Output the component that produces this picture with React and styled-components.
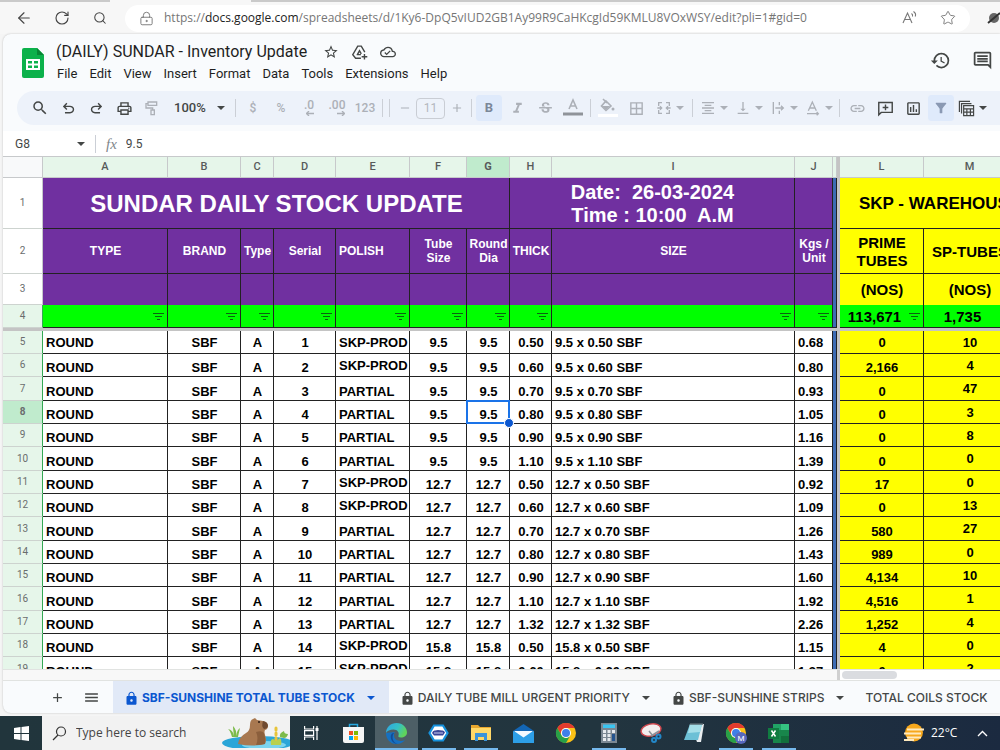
import React from 'react';
import styled, { createGlobalStyle, css } from 'styled-components';
import { ArrowLeft, RotateCw, Search, LockKeyhole, Star } from 'lucide-react';
import {
  MdSearch, MdOutlineLocalPrintshop, MdFormatItalic, MdStrikethroughS, MdBorderAll,
  MdFormatAlignCenter, MdVerticalAlignBottom, MdLink, MdFilterAlt, MdHistory, MdStarBorder,
  MdOutlineCloudDone, MdLock, MdMenu, MdAdd, MdRemove, MdOutlineInsertChart,
  MdOutlineComment,
} from 'react-icons/md';

const ui = 'Roboto, "Liberation Sans", sans-serif';
const segoe = '"Open Sans", "Noto Sans", sans-serif';

const Global = createGlobalStyle`
  * { box-sizing: border-box; }
  body { margin: 0; overflow: hidden; background: #f5f5f5; font-family: ${ui}; }
  button, input, select { font: inherit; color: inherit; border: 0; background: none; padding: 0; margin: 0; outline: none; }
  svg { display: block; flex: none; }
`;

const Screen = styled.div`
  display: flex;
  flex-direction: column;
  height: 100vh;
  overflow: hidden;
`;

/* ---------- browser ---------- */
const TabStrip = styled.div`
  display: flex;
  height: 2px;
  flex: none;
`;
const StripPart = styled.div`
  width: ${(p) => p.$w || 'auto'};
  flex: ${(p) => (p.$w ? 'none' : 1)};
  background: ${(p) => (p.$active ? '#f7f7f7' : '#cacaca')};
`;
const AddressRow = styled.div`
  display: flex;
  align-items: center;
  flex: none;
  height: 32px;
  padding-left: 5px;
  background: #f7f7f7;
  color: #444;
`;
const BrowserButton = styled.button`
  display: flex;
  align-items: center;
  justify-content: center;
  width: 38px;
  height: 26px;
`;
const Omnibox = styled.div`
  display: flex;
  align-items: center;
  flex: 1;
  height: 27px;
  margin-left: 6px;
  padding: 0 3px 0 14px;
  border-radius: 14px;
  background: #fff;
  color: #777;
`;
const Url = styled.div`
  flex: 1;
  margin-left: 10px;
  font: 12px/18px ${segoe};
  white-space: nowrap;
  color: #767676;
  b { font-weight: 400; color: #222; }
`;
const Extension = styled.div`
  width: 30px;
  padding-left: 17px;
  overflow: hidden;
`;

/* ---------- document shell ---------- */
const Doc = styled.main`
  display: flex;
  flex-direction: column;
  flex: 1;
  min-height: 0;
  margin: 0 0 3px 3px;
  border-radius: 8px 0 0 8px;
  overflow: hidden;
  background: #f9fbfd;
  box-shadow: 0 0 2px #bbb;
`;
const Header = styled.header`
  display: flex;
  align-items: center;
  flex: none;
  height: 57px;
  padding: 0 7px 0 19px;
  color: #444746;
`;
const TitleBlock = styled.div`
  flex: 1;
  margin-left: 8px;
`;
const TitleRow = styled.div`
  display: flex;
  align-items: center;
  gap: 12px;
  height: 22px;
  padding-left: 4px;
`;
const Title = styled.h1`
  margin: 0 4px 0 0;
  font: 400 16px/22px ${ui};
  color: #1f1f1f;
  white-space: nowrap;
`;
const Menu = styled.nav`
  display: flex;
  height: 20px;
  margin-top: 1px;
`;
const MenuItem = styled.button`
  padding: 0 7px 0 5px;
  font: 13px/20px ${ui};
  color: #1f1f1f;
`;
const HeaderActions = styled.div`
  display: flex;
  gap: 21px;
  padding-bottom: 4px;
`;

const Toolbar = styled.div`
  display: flex;
  align-items: center;
  flex: none;
  height: 34px;
  margin-left: 14px;
  padding-left: 9px;
  border-radius: 17px 0 0 17px;
  background: #edf2fa;
  overflow: hidden;
  color: #444746;
`;
const Tool = styled.button`
  display: flex;
  align-items: center;
  justify-content: center;
  gap: 4px;
  flex: none;
  width: ${(p) => p.$w || 28}px;
  height: 26px;
  font: 500 12px/16px ${ui};
  color: ${(p) => (p.$dim ? '#acb0b7' : '#444746')};
  ${(p) => p.$on && css`
    background: #dfeafb;
    border: 1px solid #edf2fa;
    border-width: 0 1px;
    border-radius: 4px;
    color: #8a99b3;
  `}
`;
const BoldTool = styled(Tool)`
  font-weight: 700;
  font-size: 13px;
  color: #7b8798;
`;
const Rule = styled.span`
  flex: none;
  width: 1px;
  height: 18px;
  margin: 0 3px;
  background: #cbcfd6;
`;
const SelectWrap = styled.label`
  display: flex;
  align-items: center;
  flex: none;
  width: 66px;
  padding-left: 8px;
  select {
    appearance: none;
    width: 43px;
    font: 500 13px/18px ${ui};
  }
`;
const SizeInput = styled.input`
  flex: none;
  width: 29px;
  height: 21px;
  border: 1px solid #c9cdd4;
  border-radius: 4px;
  text-align: center;
  font-size: 12px;
  color: #b3b7bd;
`;
const Decimals = styled.span`
  display: flex;
  flex-direction: column;
  align-items: flex-end;
  line-height: 11px;
`;

const FormulaBar = styled.div`
  display: flex;
  align-items: center;
  flex: none;
  height: 26px;
  margin-top: 6px;
  padding-left: 12px;
  background: #fff;
  border-bottom: 1px solid #c7c9cb;
  color: #444746;
`;
const NameBox = styled.input`
  width: 62px;
  font-size: 12px;
`;
const NameRule = styled(Rule)`
  margin-left: 10px;
`;
const FormulaInput = styled.input`
  flex: 1;
  margin-left: 9px;
  font-size: 12px;
`;
const Fx = styled.i`
  margin-left: 7px;
  font: italic 15px/18px "Liberation Serif", serif;
  color: #80868b;
`;

/* ---------- grid ---------- */
const GridArea = styled.div`
  flex: 1;
  min-height: 0;
  overflow: hidden;
  background: #fff;
`;
const Table = styled.table`
  table-layout: fixed;
  width: 100%;
  min-width: 1013px;
  border-spacing: 0;
  font: 700 13px/16px "Liberation Sans", Arial, sans-serif;
  color: #000;
`;
const Row = styled.tr`
  height: ${(p) => p.$h}px;
`;
const DataRow = styled.tr`
  height: 23px;
  &:nth-child(3n) { height: 24px; }
`;
const ColHead = styled.th`
  padding: 0;
  height: 21px;
  font: ${(p) => (p.$on ? 700 : 500)} 11px/16px ${ui};
  color: #575a5a;
  background: ${(p) => (p.$on ? '#c0ebcd' : p.$blank ? '#f8f9fa' : '#e6f6ea')};
  border-right: 1px solid #c7c9cb;
  border-bottom: 1px solid #c7c9cb;
`;
const RowHead = styled.th`
  padding: 0;
  font: ${(p) => (p.$on ? 700 : 400)} 10px/14px ${ui};
  color: #6a6d6d;
  background: ${(p) => (p.$on ? '#c0ebcd' : p.$plain ? '#fff' : '#e6f6ea')};
  border-bottom: 1px solid #cdd3cf;
  border-right: 1px solid ${(p) => (p.$plain ? '#c7c9cb' : '#34a853')};
`;
const tones = {
  purple: css`background: #7030a0; color: #fff;`,
  green: css`background: #00ff00;`,
  yellow: css`background: #ffff00;`,
  blue: css`background: #3d6cb4;`,
  white: css`background: #fff;`,
};
const Cell = styled.td`
  position: relative;
  padding: 1px 0 0 ${(p) => (p.$left ? 3 : 1)}px;
  text-align: ${(p) => (p.$left ? 'left' : 'center')};
  vertical-align: ${(p) => (p.$bottom ? 'bottom' : 'middle')};
  white-space: nowrap;
  border-right: 1px solid #222;
  border-bottom: ${(p) => (p.$open ? 0 : 1)}px solid #222;
  ${(p) => tones[p.$tone || 'white']}
`;
const BannerCell = styled(Cell)`
  font-size: ${(p) => p.$size}px;
  line-height: 23px;
  white-space: pre;
`;
const WarehouseCell = styled(BannerCell)`
  padding-left: 19px;
  overflow: hidden;
`;
const LabelCell = styled(Cell)`
  padding-top: 0;
  font-size: 12px;
  line-height: 14px;
  white-space: pre-line;
`;
const StockCell = styled(Cell)`
  font-size: 15px;
  line-height: 18px;
  white-space: pre-line;
`;
const FilterCell = styled(Cell)`
  padding: 1px 3px 0 0;
  font-size: 15px;
`;
const FilterRow = styled.div`
  display: flex;
  align-items: center;
  span { flex: 1; }
`;
const FreezeCol = styled.td`
  padding: 0;
  background: #c4c4c4;
`;
const FreezeRow = styled.td`
  height: 3px;
  padding: 0;
  background: #c4c4c4;
`;
const Selection = styled.span`
  position: absolute;
  z-index: 1;
  inset: -1px;
  border: 2px solid #1a73e8;
  &::after {
    content: '';
    position: absolute;
    right: -6px;
    bottom: -6px;
    width: 8px;
    height: 8px;
    border: 1px solid #fff;
    border-radius: 50%;
    background: #0b57d0;
  }
`;

const ScrollStrip = styled.div`
  display: flex;
  flex: none;
  height: 12px;
  background: #f8f8f8;
  border-top: 1px solid #e1e3e1;
  border-bottom: 1px solid #e1e3e1;
`;
const ScrollGap = styled.div`
  width: 837px;
  border-right: 3px solid #d0d0d0;
`;
const ScrollTrack = styled.div`
  flex: 1;
  padding: 1px 2px;
  background: #fff;
`;
const ScrollThumb = styled.div`
  width: 55px;
  height: 8px;
  border-radius: 4px;
  background: #dadce0;
`;

const SheetTabs = styled.div`
  display: flex;
  flex: none;
  height: 32px;
  padding-left: 37px;
  color: #444746;
`;
const SheetTool = styled.button`
  display: flex;
  align-items: center;
  justify-content: center;
  width: 34px;
`;
const SheetTab = styled.button`
  display: flex;
  align-items: center;
  flex: none;
  gap: 3px;
  padding: 2px ${(p) => (p.$on ? 14 : 10)}px 0 11px;
  margin-left: ${(p) => (p.$on ? 5 : 0)}px;
  font: ${(p) => (p.$on ? 700 : 500)} 12px/18px Inter, sans-serif;
  white-space: nowrap;
  background: ${(p) => (p.$on ? '#e1e9f7' : 'none')};
  color: ${(p) => (p.$on ? '#0b57d0' : '#444746')};
  svg:last-child { margin-left: 9px; }
`;

/* ---------- taskbar ---------- */
const Taskbar = styled.footer`
  display: flex;
  flex: none;
  height: 34px;
  background: linear-gradient(90deg, #21353c, #22353f 60%, #1b2a40);
  color: #fff;
`;
const StartButton = styled.button`
  display: flex;
  align-items: center;
  justify-content: center;
  width: 42px;
`;
const SearchBox = styled.label`
  display: flex;
  align-items: center;
  width: 248px;
  padding-left: 10px;
  background: #f2f2f2;
  color: #333;
  input {
    flex: 1;
    min-width: 0;
    margin-left: 9px;
    font: 12px/18px ${segoe};
  }
  input::placeholder { color: #444; opacity: 1; }
`;
const TaskList = styled.div`
  display: flex;
  flex: none;
  width: 510px;
`;
const TaskButton = styled.button`
  display: flex;
  align-items: center;
  justify-content: center;
  flex: 1;
  padding-top: 2px;
  border-bottom: 2px solid transparent;
  ${(p) => p.$active && css`background: #4d5f66; border-bottom-color: #76b9ed;`}
  ${(p) => p.$running && css`
    background: linear-gradient(#76b9ed, #76b9ed) center bottom / 34px 2px no-repeat border-box;
  `}
`;
const Tray = styled.div`
  display: flex;
  align-items: center;
  margin-left: auto;
  overflow: hidden;
  width: 97px;
  font: 12px/18px ${segoe};
  svg + svg { margin-left: 12px; }
`;
const Temp = styled.span`
  margin: 0 20px 0 6px;
`;

/* ---------- drawings ---------- */
const Caret = ({ c = 'currentColor' }) => (
  <svg width="8" height="4" viewBox="0 0 8 4" fill={c}><path d="M0 0h8L4 4z" /></svg>
);
const G = ({ s = 16, children, ...r }) => (
  <svg width={s} height={s} viewBox="0 0 24 24" fill="currentColor" {...r}>{children}</svg>
);
const line = { fill: 'none', stroke: 'currentColor', strokeWidth: 2 };
const undoPath = 'M7 19v-2h7.1q1.6 0 2.7-1T18 13.500 16.800 11 14.100 10H7.800l2.600 2.600L9 14 4 9l5-5 1.400 1.400L7.800 8h6.300q2.400 0 4.200 1.600T20 13.500t-1.700 3.900T14.100 19z';
const Undo = () => <G s={17}><path d={undoPath} /></G>;
const Redo = () => <G s={17}><g transform="matrix(-1 0 0 1 24 0)"><path d={undoPath} /></g></G>;
const Roller = () => <G><path {...line} d="M6 3h13v5H6zM6 5.500H3V12h10v3M10.500 15h5v7h-5z" /></G>;
const Fill = () => (
  <svg width="20" height="20" viewBox="0 0 20 20">
    <path d="M5 1l4 4M8 3l5 5-5 4.500L3.500 8z" fill="none" stroke="#acb0b7" strokeWidth="1.600" />
    <path d="M4 8h8l-4 4z" fill="#acb0b7" /><circle cx="15" cy="11" r="1.500" fill="#acb0b7" />
    <path d="M0 16h20v3H0z" fill="#fff" />
  </svg>
);
const TextColor = () => (
  <svg width="20" height="20" viewBox="0 0 20 20">
    <path d="M6 11l4-9 4 9M7.500 8h5" fill="none" stroke="#acb0b7" strokeWidth="1.600" />
    <path d="M0 14.500h20v3H0z" fill="#8f9399" />
  </svg>
);
const AddToDrive = () => (
  <G s={17}><path {...line} d="M14 20H6.500L2.500 15 9.500 3h5l5 8.500M9 15l3-5.500 2.500 4.500M8 15h6M19 14v8M15 18h8" /></G>
);
const Merge = () => <G><path {...line} d="M9 4H4v5M15 4h5v5M9 20H4v-5M15 20h5v-5M2 12h6M22 12h-6M6 9.500L8.500 12 6 14.500M18 9.500L15.500 12l2.500 2.500" /></G>;
const Wrap = () => <G><path {...line} d="M5 3v18M14 3v5M14 16v5M8 12h12M16.500 8.500L20 12l-3.500 3.500" /></G>;
const Rotate = () => <G><path {...line} d="M5 16L11 3l6 13M7 12h8M3 20.500h17M17.500 18l2.500 2.500-2.500 2.500" /></G>;
const AddComment = () => <G s={17}><path {...line} d="M2.500 21V3.500h19v14H6zM12 6.500v8M8 10.500h8" /></G>;
const TableViews = () => <G s={17}><path {...line} strokeWidth={1.7} d="M2 17V2h15M5 19V5h14M8 8h14v14H8zM8 12.500h14M8 17h14M12.500 12.500V22M17.500 12.500V22" /></G>;
const Arrow = ({ flip }) => (
  <svg width="8" height="5" viewBox="0 0 8 5"><path d={flip ? 'M0 2.500h7M5 0l2.500 2.500L5 5' : 'M8 2.500H1M3 0L.5 2.500 3 5'} fill="none" stroke="currentColor" strokeWidth="1.300" /></svg>
);
const FilterIcon = () => (
  <svg width="11" height="7" viewBox="0 0 11 7"><path d="M0 .5h11M2 3.500h7M4 6.500h3" stroke="#0a6410" /></svg>
);
const SheetsLogo = () => (
  <svg width="22" height="30" viewBox="0 0 22 30">
    <path d="M2 0h13l7 7v21a2 2 0 0 1-2 2H2a2 2 0 0 1-2-2V2a2 2 0 0 1 2-2z" fill="#0cb14b" />
    <path d="M15 0l7 7h-7z" fill="#078735" />
    <path d="M4 11h14v11H4zM6 13v2.500h4V13zM12 13v2.500h4V13zM6 17.500V20h4v-2.500zM12 17.500V20h4v-2.500z" fill="#fff" fillRule="evenodd" />
  </svg>
);
const ReadAloud = () => (
  <svg width="16" height="16" viewBox="0 0 16 16" fill="none" stroke="#777" strokeWidth="1.100"><path d="M1 13L5.500 3 10 13M2.700 9.500h5.600M9.500 3.500q1.500 1 1 3M11.500 1.500q3 2 1.700 5" /></svg>
);
const Planet = () => (
  <svg width="14" height="14" viewBox="0 0 14 14"><circle cx="7" cy="7" r="5" fill="#666" /><path d="M1 12L13 2" stroke="#333" strokeWidth="2" /></svg>
);
const Windows = () => (
  <svg width="15" height="15" viewBox="0 0 15 15" fill="#fff"><path d="M0 2l6.500-1v6H0zM7.500 1L15 0v7H7.500zM0 8h6.500v6L0 13zM7.500 8H15v7l-7.500-1z" /></svg>
);
const Capybara = () => (
  <svg width="68" height="30" viewBox="0 0 68 30">
    <ellipse cx="36" cy="25" rx="36" ry="7" fill="#2ba6d8" />
    <ellipse cx="42" cy="27" rx="22" ry="4" fill="#7bd3ee" />
    <path d="M10 19Q8 12 6 11q5 1 6 7Q11 11 11 8q4 4 3 10 1-6 4-8-1 4-2 9z" fill="#7dbb4c" />
    <path d="M16 26q1-7 8-11 4-2 4-8 0-5 3-6l2-1 2 2 6 1q5 1 5 5 0 3-3 4-1 2 0 5 2 6 0 9-12 3-27 0z" fill="#a87850" />
    <path d="M34 14q6-2 8 1 2 6 1 11-4 1-9 1 3-7 0-13z" fill="#8b5f3c" />
    <path d="M41 3q5 1 5 5-1 3-4 3-3-3-1-8z" fill="#704a30" /><circle cx="37" cy="4" r="1" fill="#2c1b12" />
    <path d="M54 22V9" stroke="#e7c43a" strokeWidth="3" strokeLinecap="round" strokeDasharray="2 3" /><path d="M49 27q-1-6 2-6l3 2 4-3q2 2 1 7z" fill="#b8d050" />
    <path d="M58 19q-1-4 4-6 0 3 4 3-1 4-4 4z" fill="#7dbb4c" />
  </svg>
);
const TaskView = () => (
  <svg width="15" height="14" viewBox="0 0 15 14" fill="none" stroke="#fff" strokeWidth="1.200"><path d="M.6 0v3h9V0M.6 14v-3h9v3M.6 4.600h9v4.800h-9zM13 0v14" /><path d="M11.500 3.500h3" strokeWidth="3" /></svg>
);
const Store = () => (
  <svg width="21" height="21" viewBox="0 0 21 21"><path d="M6.500 5V1.500h8V5" fill="none" stroke="#27a8e0" strokeWidth="1.500" /><path d="M0 4h21v14a2 2 0 0 1-2 2H2a2 2 0 0 1-2-2z" fill="#f5f5f5" /><path d="M6 8h4v4H6z" fill="#f25022" /><path d="M11 8h4v4h-4z" fill="#7fba00" /><path d="M6 13h4v4H6z" fill="#00a4ef" /><path d="M11 13h4v4h-4z" fill="#ffb900" /></svg>
);
const Edge = () => (
  <svg width="21" height="21" viewBox="0 0 21 21">
    <defs><linearGradient id="eg" x1="0" y1="0" x2="1" y2=".4"><stop offset="0" stopColor="#2fa5e6" /><stop offset=".6" stopColor="#35c1c4" /><stop offset="1" stopColor="#5fd35b" /></linearGradient></defs>
    <path d="M0 10c0 6 4 11 10.500 11 4 0 7-2 8.500-4-4 2-11 1-11-5 0-2 1-3 1-3z" fill="#1670c0" />
    <path d="M0 10C0 4 5 0 10.500 0 17 0 21 5 21 9.500c0 3.500-3 5-6 5-2.500 0-3-1-2.500-2 1-3-1-6-5-6C4 6.500 1 8 0 10z" fill="url(#eg)" />
    <path d="M8 10c-3 4-1 10 4 11-6 0-8-6-7-9 1-2 2-2 3-2z" fill="#114c96" />
  </svg>
);
const Hexagon = () => (
  <svg width="21" height="18" viewBox="0 0 21 18"><path d="M6 1.500h9l4.500 7.500L15 16.500H6L1.500 9z" fill="#fff" stroke="#1591dc" strokeWidth="2.200" /><path d="M4 9q1-3 3-2.500l3-.5 4 .5q2-.5 3 2l-2 3H6z" fill="#3a4597" /><path d="M6 9h9" stroke="#c9cdf0" /></svg>
);
const Folder = () => (
  <svg width="20" height="18" viewBox="0 0 20 18"><path d="M0 1h7l2 2h11v13H0z" fill="#e8a72e" /><path d="M0 4h20v12H0z" fill="#ffd868" /><path d="M4 9h12v8h-3v-4H7v4H4z" fill="#3b93d9" /></svg>
);
const Mail = () => (
  <svg width="21" height="19" viewBox="0 0 21 19"><path d="M0 7l10.500-7L21 7v12H0z" fill="#1366b5" /><path d="M2 7h17l2 12H0z" fill="#2d9fe8" /><path d="M0 7l10.500 6L21 7v12H0z" fill="#2d9fe8" /><path d="M1 7h19l-9.500 6.500z" fill="#f3f9ff" /></svg>
);
const Chrome = ({ badge }) => (
  <svg width="22" height="22" viewBox="0 0 22 22">
    <circle cx="11" cy="11" r="10" fill="#fbc116" />
    <path d="M2.300 6A10 10 0 0 1 19.700 6H11a5 5 0 0 0-4.300 7.500z" fill="#e33b2e" />
    <path d="M2.300 6A10 10 0 0 0 11 21l4.300-7.500a5 5 0 0 1-8.600 0z" fill="#28a148" />
    <circle cx="11" cy="11" r="5" fill="#fff" /><circle cx="11" cy="11" r="4" fill="#3f7fe8" />
    {badge && <><circle cx="16" cy="16" r="6" fill="#5868bd" /><text x="16" y="19" textAnchor="middle" fontSize="8" fontFamily="Roboto" fill="#fff">M</text></>}
  </svg>
);
const Calculator = () => (
  <svg width="16" height="20" viewBox="0 0 16 20"><path d="M0 0h16v20H0z" fill="#7b8893" /><path d="M2 1.500h12V5H2z" fill="#3bc5f1" /><path d="M2 7h3v3H2zM6.500 7h3v3h-3zM11 7h3v3h-3zM2 11h3v3H2zM6.500 11h3v3h-3zM2 15h3v3H2zM6.500 15h3v3h-3z" fill="#e6eaee" /><path d="M11 11h3v7h-3z" fill="#24548f" /></svg>
);
const Snip = () => (
  <svg width="22" height="20" viewBox="0 0 22 20"><ellipse cx="11" cy="7" rx="10" ry="6" transform="rotate(-12 11 7)" fill="#f3eeee" stroke="#d14a50" strokeWidth="1.500" /><path d="M9 8l4 5M19 8l-8 5" stroke="#8b929a" strokeWidth="1.500" /><g fill="none" stroke="#2387c8" strokeWidth="2"><circle cx="14" cy="17" r="2" /><circle cx="18.500" cy="13.500" r="2" /></g></svg>
);
const Notepad = () => (
  <svg width="20" height="20" viewBox="0 0 20 20"><path d="M6 1h14l-3 18-4 0z" fill="#e9edf0" /><path d="M6 1h12l-4 16H0z" fill="#6cc0d6" /><path d="M6 1h12l-2 8-12 1z" fill="#a5dfe9" /><path d="M6 1h13" stroke="#596a72" strokeWidth="1.500" /></svg>
);
const Excel = () => (
  <svg width="21" height="19" viewBox="0 0 21 19"><path d="M5 0h16v19H5z" fill="#18864b" /><path d="M13 0h8v6h-8z" fill="#35c481" /><path d="M5 0h8v6H5z" fill="#21a366" /><path d="M13 12h8v7h-8z" fill="#12703c" /><path d="M0 4h11v11H0z" fill="#107c41" /><path d="M3.500 6.500l4 6M7.500 6.500l-4 6" stroke="#fff" strokeWidth="1.500" /></svg>
);
const Weather = () => (
  <svg width="22" height="20" viewBox="0 0 22 20"><circle cx="11" cy="9.500" r="9" fill="#f7a81c" /><path d="M4 6.500h17M1 10.500h17M4 14.500h14M1 17h10" stroke="#ffe9bd" strokeWidth="1.800" /></svg>
);

/* ---------- content ---------- */
const widths = [40, 125, 73, 33, 62, 74, 57, 43, 42, 243, 38, 4, 3, 84];
const letters = ['A', 'B', 'C', 'D', 'E', 'F', 'G', 'H', 'I', 'J', ''];
const labels = ['TYPE', 'BRAND', 'Type', 'Serial', 'POLISH', 'Tube\nSize', 'Round\nDia', 'THICK', 'SIZE', 'Kgs /\nUnit'];
const S = 'SKP-PROD';
const P = 'PARTIAL';
const data = [
  [S, '9.5', '0.50', '0.68', '0', '10'],
  [S, '9.5', '0.60', '0.80', '2,166', '4'],
  [P, '9.5', '0.70', '0.93', '0', '47'],
  [P, '9.5', '0.80', '1.05', '0', '3'],
  [P, '9.5', '0.90', '1.16', '0', '8'],
  [P, '9.5', '1.10', '1.39', '0', '0'],
  [S, '12.7', '0.50', '0.92', '17', '0'],
  [S, '12.7', '0.60', '1.09', '0', '13'],
  [P, '12.7', '0.70', '1.26', '580', '27'],
  [P, '12.7', '0.80', '1.43', '989', '0'],
  [P, '12.7', '0.90', '1.60', '4,134', '10'],
  [P, '12.7', '1.10', '1.92', '4,516', '1'],
  [P, '12.7', '1.32', '2.26', '1,252', '4'],
  [S, '15.8', '0.50', '1.15', '4', '0'],
  [S, '15.8', '0.60', '1.37', '0', '2'],
];

const Filtered = ({ children }) => (
  <FilterCell $tone="green"><FilterRow><span>{children}</span><FilterIcon /></FilterRow></FilterCell>
);

function StockTable() {
  return (
    <Table>
      <colgroup>{widths.map((w, i) => <col key={i} width={w} />)}<col /></colgroup>
      <thead>
        <tr>
          <ColHead $blank />
          {letters.map((l, i) => <ColHead key={i} $on={l === 'G'}>{l}</ColHead>)}
          <FreezeCol />
          <ColHead>L</ColHead>
          <ColHead>M</ColHead>
        </tr>
      </thead>
      <tbody>
        <Row $h={51}>
          <RowHead $plain>1</RowHead>
          <BannerCell colSpan={7} $tone="purple" $size={24}>SUNDAR DAILY STOCK UPDATE</BannerCell>
          <BannerCell colSpan={2} $tone="purple" $size={20}>{'Date:  26-03-2024\nTime : 10:00  A.M'}</BannerCell>
          <Cell $tone="purple" />
          <Cell $tone="blue" $open />
          <FreezeCol />
          <WarehouseCell colSpan={2} $left $tone="yellow" $size={17}>SKP - WAREHOUSE</WarehouseCell>
        </Row>
        <Row $h={45}>
          <RowHead $plain>2</RowHead>
          {labels.map((l) => <LabelCell key={l} $tone="purple" $left={l === 'POLISH'}>{l}</LabelCell>)}
          <Cell $tone="blue" $open />
          <FreezeCol />
          <StockCell $tone="yellow">{'PRIME\nTUBES'}</StockCell>
          <StockCell $tone="yellow">SP-TUBES</StockCell>
        </Row>
        <Row $h={31}>
          <RowHead $plain>3</RowHead>
          {labels.map((l) => <Cell key={l} $tone="purple" $open />)}
          <Cell $tone="blue" $open />
          <FreezeCol />
          <StockCell $tone="yellow" $open>(NOS)</StockCell>
          <StockCell $tone="yellow" $open>(NOS)</StockCell>
        </Row>
        <Row $h={23}>
          <RowHead>4</RowHead>
          {labels.map((l) => <Filtered key={l} />)}
          <Cell $tone="blue" />
          <FreezeCol />
          <Filtered>113,671</Filtered>
          <Filtered>1,735</Filtered>
        </Row>
        <tr><FreezeRow colSpan={15} /></tr>
      </tbody>
      <tbody>
        {data.map(([polish, tube, thick, kgs, prime, sp], i) => (
          <DataRow key={i}>
            <RowHead $on={i === 3}>{i + 5}</RowHead>
            <Cell $left $bottom={i > 0}>ROUND</Cell>
            <Cell $bottom={i > 0}>SBF</Cell>
            <Cell $bottom={i > 0}>A</Cell>
            <Cell $bottom={i > 0}>{i + 1}</Cell>
            <Cell $left $bottom={polish === P}>{polish}</Cell>
            <Cell $bottom={i > 0}>{tube}</Cell>
            <Cell $bottom={i > 0}>{tube}{i === 3 && <Selection />}</Cell>
            <Cell $bottom={i > 0}>{thick}</Cell>
            <Cell $left $bottom={i > 0}>{`${tube} x ${thick} SBF`}</Cell>
            <Cell $left $bottom={i > 0}>{kgs}</Cell>
            <Cell $tone="blue" $open />
            <FreezeCol />
            <Cell $tone="yellow" $bottom={i > 0}>{prime}</Cell>
            <Cell $tone="yellow">{sp}</Cell>
          </DataRow>
        ))}
      </tbody>
    </Table>
  );
}

const tasks = [
  [TaskView, 'Task View'], [Store, 'Store'], [Edge, 'Edge', 'active'], [Hexagon, 'SKP', 'running'],
  [Folder, 'File Explorer', 'running'], [Mail, 'Mail'], [Chrome, 'Chrome'], [Calculator, 'Calculator', 'running'],
  [Snip, 'Snipping Tool'], [Notepad, 'Notepad'], [() => <Chrome badge />, 'Chrome profile', 'running'], [Excel, 'Excel', 'running'],
];

export default function App() {
  return (
    <Screen>
      <Global />
      <TabStrip><StripPart $w="110px" /><StripPart $w="141px" $active /><StripPart /></TabStrip>
      <AddressRow>
        <BrowserButton aria-label="Back"><ArrowLeft size={18} strokeWidth={1.5} /></BrowserButton>
        <BrowserButton aria-label="Refresh"><RotateCw size={16} strokeWidth={1.7} /></BrowserButton>
        <BrowserButton aria-label="Search"><Search size={14} strokeWidth={1.8} /></BrowserButton>
        <Omnibox>
          <LockKeyhole size={15} strokeWidth={1.5} />
          <Url>https://<b>docs.google.com</b>/spreadsheets/d/1Ky6-DpQ5vIUD2GB1Ay99R9CaHKcgId59KMLU8VOxWSY/edit?pli=1#gid=0</Url>
          <BrowserButton aria-label="Read aloud"><ReadAloud /></BrowserButton>
          <BrowserButton aria-label="Favourite"><Star size={16} strokeWidth={1.4} /></BrowserButton>
        </Omnibox>
        <Extension><Planet /></Extension>
      </AddressRow>

      <Doc>
        <Header>
          <SheetsLogo />
          <TitleBlock>
            <TitleRow>
              <Title>(DAILY) SUNDAR - Inventory Update</Title>
              <MdStarBorder size={16} />
              <AddToDrive />
              <MdOutlineCloudDone size={16} />
            </TitleRow>
            <Menu>
              {['File', 'Edit', 'View', 'Insert', 'Format', 'Data', 'Tools', 'Extensions', 'Help'].map((m) => <MenuItem key={m}>{m}</MenuItem>)}
            </Menu>
          </TitleBlock>
          <HeaderActions><MdHistory size={21} /><MdOutlineComment size={21} /></HeaderActions>
        </Header>

        <Toolbar>
          <Tool aria-label="Search menus"><MdSearch size={18} /></Tool>
          <Tool aria-label="Undo"><Undo /></Tool>
          <Tool aria-label="Redo"><Redo /></Tool>
          <Tool aria-label="Print"><MdOutlineLocalPrintshop size={17} /></Tool>
          <Tool $dim aria-label="Paint format"><Roller /></Tool>
          <SelectWrap><select aria-label="Zoom"><option>100%</option></select><Caret /></SelectWrap>
          <Rule />
          <Tool $dim>$</Tool>
          <Tool $dim>%</Tool>
          <Tool $dim aria-label="Decrease decimals"><Decimals>.0<Arrow /></Decimals></Tool>
          <Tool $dim aria-label="Increase decimals"><Decimals>.00<Arrow flip /></Decimals></Tool>
          <Tool $dim>123</Tool>
          <Rule /><Rule />
          <Tool $w={23} $dim aria-label="Smaller"><MdRemove size={14} /></Tool>
          <SizeInput aria-label="Font size" defaultValue="11" />
          <Tool $w={23} $dim aria-label="Larger"><MdAdd size={14} /></Tool>
          <Rule />
          <BoldTool $on>B</BoldTool>
          <Tool $dim aria-label="Italic"><MdFormatItalic size={17} /></Tool>
          <Tool $dim aria-label="Strikethrough"><MdStrikethroughS size={17} /></Tool>
          <Tool $dim aria-label="Text colour"><TextColor /></Tool>
          <Rule />
          <Tool $dim aria-label="Fill colour"><Fill /></Tool>
          <Tool $dim aria-label="Borders"><MdBorderAll size={17} /></Tool>
          <Tool $dim $w={39} aria-label="Merge"><Merge /><Caret /></Tool>
          <Rule />
          <Tool $dim $w={35} aria-label="Align"><MdFormatAlignCenter size={16} /><Caret /></Tool>
          <Tool $dim $w={35} aria-label="Vertical align"><MdVerticalAlignBottom size={16} /><Caret /></Tool>
          <Tool $dim $w={35} aria-label="Wrap"><Wrap /><Caret /></Tool>
          <Tool $dim $w={35} aria-label="Rotate"><Rotate /><Caret /></Tool>
          <Rule />
          <Tool $dim aria-label="Link"><MdLink size={17} /></Tool>
          <Tool aria-label="Comment"><AddComment /></Tool>
          <Tool aria-label="Chart"><MdOutlineInsertChart size={17} /></Tool>
          <Tool $on aria-label="Filter"><MdFilterAlt size={16} /></Tool>
          <Tool $w={35} aria-label="Filter views"><TableViews /><Caret /></Tool>
        </Toolbar>

        <FormulaBar>
          <NameBox aria-label="Name box" defaultValue="G8" />
          <Caret />
          <NameRule />
          <Fx>fx</Fx>
          <FormulaInput aria-label="Formula" defaultValue="9.5" />
        </FormulaBar>

        <GridArea><StockTable /></GridArea>
        <ScrollStrip><ScrollGap /><ScrollTrack><ScrollThumb /></ScrollTrack></ScrollStrip>

        <SheetTabs>
          <SheetTool aria-label="Add sheet"><MdAdd size={15} /></SheetTool>
          <SheetTool aria-label="All sheets"><MdMenu size={17} /></SheetTool>
          <SheetTab $on><MdLock size={15} />SBF-SUNSHINE TOTAL TUBE STOCK<Caret /></SheetTab>
          <SheetTab><MdLock size={15} />DAILY TUBE MILL URGENT PRIORITY<Caret /></SheetTab>
          <SheetTab><MdLock size={15} />SBF-SUNSHINE STRIPS<Caret /></SheetTab>
          <SheetTab>TOTAL COILS STOCK</SheetTab>
        </SheetTabs>
      </Doc>

      <Taskbar>
        <StartButton aria-label="Start"><Windows /></StartButton>
        <SearchBox>
          <svg width="15" height="15" viewBox="0 0 15 15" fill="none" stroke="currentColor" strokeWidth="1.2"><circle cx="9" cy="5.500" r="4.500" /><path d="M6 9l-5 5" /></svg>
          <input placeholder="Type here to search" aria-label="Type here to search" />
          <Capybara />
        </SearchBox>
        <TaskList>
          {tasks.map(([Icon, name, state]) => (
            <TaskButton key={name} aria-label={name} $active={state === 'active'} $running={state === 'running'}><Icon /></TaskButton>
          ))}
        </TaskList>
        <Tray>
          <Weather />
          <Temp>22°C</Temp>
          <svg width="11" height="7" viewBox="0 0 11 7" fill="none" stroke="#fff" strokeWidth="1.400"><path d="M1 6l4.500-4.500L10 6" /></svg>
          <svg width="10" height="10" viewBox="0 0 10 10" fill="none" stroke="#ddd"><path d="M0 2h10v6H0z" /></svg>
        </Tray>
      </Taskbar>
    </Screen>
  );
}
